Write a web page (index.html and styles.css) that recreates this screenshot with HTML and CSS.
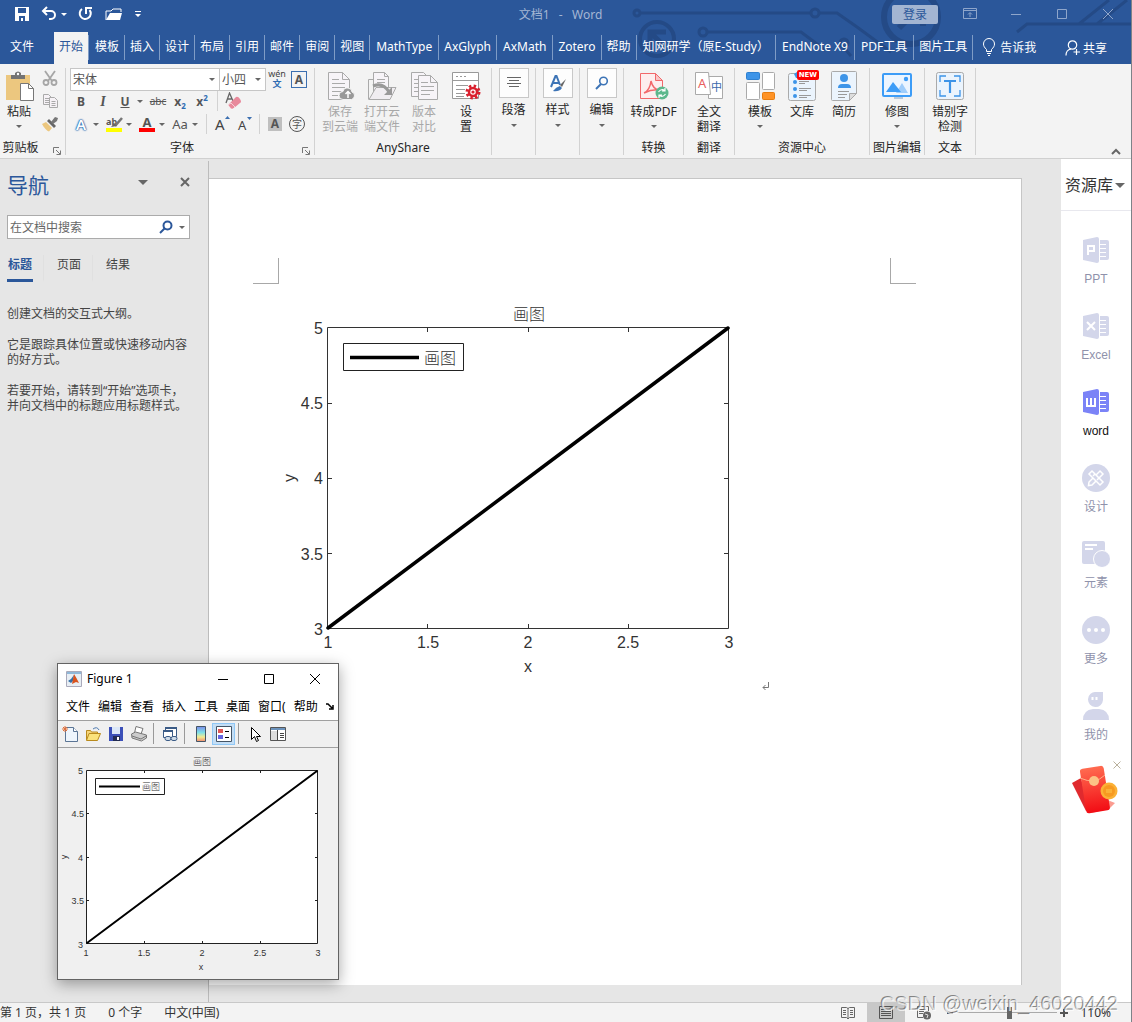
FILE: index.html
```html
<!DOCTYPE html>
<html lang="zh-CN">
<head>
    <meta charset="UTF-8">
    <meta name="viewport" content="width=device-width, initial-scale=1.0">
    <title>文档1 - Word</title>
    <link rel="stylesheet" href="styles.css">
</head>
<body>
    <header class="app-header">
        <!-- circuit pattern behind the title bar -->
        <svg class="circuit" width="500" height="64" viewBox="632 0 500 64" fill="none" stroke="#244a86" stroke-width="3">
            <circle cx="638" cy="13" r="3"/>
            <path d="M642 13H812M820 13h18l20 14 34 25M708 32h94l24 18M840 42l12 14"/>
            <circle cx="816" cy="13" r="4"/>
            <circle cx="704" cy="32" r="4"/>
            <circle cx="845" cy="43" r="4"/>
            <circle cx="658" cy="39" r="17" stroke-width="4"/>
            <path d="M651 50V32h16M652 33l14 14" stroke-width="5"/>
            <circle cx="912" cy="17" r="27" stroke-width="6"/>
            <path d="M900 28l20-20M906 8h18v18" stroke-width="6"/>
            <path d="M1018 32l10-8h104M1080 24l30-24M1098 24l30-24"/>
        </svg>

        <div class="titlebar">
            <div class="quick">
                <button aria-label="保存">
                    <svg width="16" height="16" viewBox="0 0 16 16"><path d="M1 1h14v14H1z" fill="#fff"/><path d="M4 2h8v5H4zM5 10h6v5H9v-3H7v3H5z" fill="#2b579a"/></svg>
                </button>
                <button class="has-caret" aria-label="撤消">
                    <svg width="16" height="16" viewBox="0 0 16 16" fill="none" stroke="#fff" stroke-width="2"><path d="M6 1L2 5l4 4M2 5h8a4 4 0 0 1 0 8H8"/></svg>
                    <i class="caret"></i>
                </button>
                <button aria-label="重复">
                    <svg width="16" height="16" viewBox="0 0 16 16" fill="none" stroke="#fff" stroke-width="2"><path d="M4 3a5.500 5.500 0 1 0 7.500 1M8 8V2h6"/></svg>
                </button>
                <button aria-label="打开">
                    <svg width="18" height="16" viewBox="0 0 18 16"><path d="M1 14V5h5l2-2h8v3" fill="none" stroke="#fff"/><path d="M5 7h12l-2 7H1z" fill="#fff"/></svg>
                </button>
                <button aria-label="自定义快速访问工具栏">
                    <svg width="8" height="8" viewBox="0 0 8 8" fill="#fff"><path d="M1 1h6v1H1zM1 4h6L4 7z"/></svg>
                </button>
            </div>
            <h1 class="doc-title">文档1&nbsp;&nbsp; -&nbsp;&nbsp; Word</h1>
            <div class="window-buttons">
                <button class="login">登录</button>
                <button aria-label="功能区显示选项"><svg width="14" height="12" viewBox="0 0 14 12" fill="none" stroke="#8fa6cb"><path d="M.5.5h13v10H.5zM.5 2.500h13M7 9V5M5 6.500l2-2 2 2"/></svg></button>
                <button aria-label="最小化"><svg width="12" height="12" viewBox="0 0 12 12" fill="none" stroke="#8fa6cb"><path d="M1 6.500h10"/></svg></button>
                <button aria-label="最大化"><svg width="12" height="12" viewBox="0 0 12 12" fill="none" stroke="#8fa6cb"><path d="M1.500 1.500h9v9h-9z"/></svg></button>
                <button aria-label="关闭"><svg width="12" height="12" viewBox="0 0 12 12" fill="none" stroke="#8fa6cb"><path d="M1 1l10 10M11 1L1 11"/></svg></button>
            </div>
        </div>

        <nav class="tabs">
            <a class="tab file" href="#">文件</a>
            <a class="tab active" href="#">开始</a>
            <a class="tab" href="#">模板</a>
            <a class="tab" href="#">插入</a>
            <a class="tab" href="#">设计</a>
            <a class="tab" href="#">布局</a>
            <a class="tab" href="#">引用</a>
            <a class="tab" href="#">邮件</a>
            <a class="tab" href="#">审阅</a>
            <a class="tab" href="#">视图</a>
            <a class="tab wide" href="#">MathType</a>
            <a class="tab" href="#">AxGlyph</a>
            <a class="tab wide" href="#">AxMath</a>
            <a class="tab" href="#">Zotero</a>
            <a class="tab" href="#">帮助</a>
            <a class="tab wide" href="#">知网研学（原E-Study）</a>
            <a class="tab wide" href="#">EndNote X9</a>
            <a class="tab wide" href="#">PDF工具</a>
            <a class="tab" href="#">图片工具</a>
            <a class="tell-me" href="#">
                <svg width="14" height="18" viewBox="0 0 14 18" fill="none" stroke="#fff"><path d="M4.500 13.500v-2C2.500 9.500 1.500 8 1.500 6a5.500 5.500 0 0 1 11 0c0 2-1 3.500-3 5.500v2zM5 15.500h4M6 17.500h2"/></svg>
                告诉我
            </a>
            <a class="share" href="#">
                <svg width="16" height="16" viewBox="0 0 16 16" fill="none" stroke="#fff" stroke-width="1.200"><circle cx="7.500" cy="5" r="4.200"/><path d="M1 15.500c0-4 2-6 5-6.500M11.500 9v6M8.500 12h6.500"/></svg>
                共享
            </a>
        </nav>
    </header>

    <section class="ribbon">
        <div class="group clipboard">
            <div class="tools">
                <button class="tool">
                    <svg width="30" height="30" viewBox="0 0 30 30"><path d="M2 4h24v25H2z" fill="#ecc77f"/><path d="M7 4h4V2q3-3 6 0v2h4v4H7z" fill="#737373"/><circle cx="14" cy="3" r="1.200" fill="#fff"/><path d="M16.500 12.500h8l5 5v12h-13z" fill="#fff" stroke="#777"/><path d="M24.500 12.500v5h5" fill="none" stroke="#777"/></svg>
                    <span>粘贴</span>
                    <i class="caret"></i>
                </button>
                <div class="stack">
                    <button aria-label="剪切"><svg width="16" height="16" viewBox="0 0 16 16" fill="none" stroke="#a6a6a6" stroke-width="1.800"><path d="M3 1l7 10M13 1L6 11"/><circle cx="4" cy="12.500" r="2.500"/><circle cx="12" cy="12.500" r="2.500"/></svg></button>
                    <button aria-label="复制"><svg width="16" height="16" viewBox="0 0 16 16" fill="#f6f2f6" stroke="#aaa"><path d="M1.500 1.500h5l3 3v7h-8zM3 5.500h4M3 7.500h4M3 9.500h4"/><path d="M7.500 4.500h5l3 3v7h-8zM9.500 8.500h4M9.500 10.500h4M9.500 12.500h4"/></svg></button>
                    <button aria-label="格式刷"><svg width="16" height="16" viewBox="0 0 16 16"><path d="M0 8l4-2 6 6-3 3.500C5 15 2 12 0 8z" fill="#ecc77f"/><path d="M5 5l2-2 7 7-2 2z" fill="#666"/><path d="M9 6l4-5 3 1-1 3-4 3z" fill="#777"/></svg></button>
                </div>
            </div>
            <div class="group-label">剪贴板</div>
            <button class="launcher" aria-label="剪贴板选项"><svg width="8" height="8" viewBox="0 0 8 8" fill="none" stroke="#777"><path d="M.5 6V.5H6M3 3l4 4M7.500 3.500v4h-4"/></svg></button>
        </div>

        <div class="group font">
            <div class="font-rows">
                <div class="font-row">
                    <label class="combo family"><select aria-label="字体"><option>宋体</option></select></label>
                    <label class="combo size"><select aria-label="字号"><option>小四</option></select></label>
                    <button class="pinyin"><small>wén</small><b>文</b></button>
                    <button class="char-border">A</button>
                </div>
                <div class="font-row">
                    <button class="fmt"><b>B</b></button>
                    <button class="fmt serif"><b><em>I</em></b></button>
                    <button class="fmt"><b><u>U</u></b></button>
                    <button class="drop" aria-label="下划线样式"><i class="caret"></i></button>
                    <button class="fmt small"><s>abc</s></button>
                    <button class="fmt"><b>x<sub>2</sub></b></button>
                    <button class="fmt"><b>x<sup>2</sup></b></button>
                    <span class="divider"></span>
                    <button class="fmt" aria-label="清除所有格式"><svg width="18" height="18" viewBox="0 0 18 18"><path d="M2 11L5.500 1 9 9M3.500 7h4" fill="none" stroke="#666" stroke-width="1.300"/><path d="M4 13l8-8q2-1 4 2t0 4l-6 5H7z" fill="#e8899b"/><path d="M4 13l3-2 4 4-2 2H7z" fill="#e8899b" stroke="#fff" stroke-width=".6"/></svg></button>
                </div>
                <div class="font-row">
                    <button class="fmt glow">A</button>
                    <button class="drop" aria-label="文本效果"><i class="caret"></i></button>
                    <button class="fmt" aria-label="突出显示"><svg width="18" height="18" viewBox="0 0 18 18"><text x="1" y="10" font-size="9" font-weight="700" fill="#555">ab</text><path d="M17 3l-7 8" stroke="#777" stroke-width="2.500"/><path d="M6 12l3-4 3 3z" fill="#666"/><path d="M1 13h16v4H1z" fill="#ff0"/></svg></button>
                    <button class="drop" aria-label="突出显示颜色"><i class="caret"></i></button>
                    <button class="fmt"><b class="font-color">A</b></button>
                    <button class="drop" aria-label="字体颜色"><i class="caret"></i></button>
                    <button class="fmt case">Aa</button>
                    <button class="drop" aria-label="更改大小写"><i class="caret"></i></button>
                    <span class="divider"></span>
                    <button class="fmt" aria-label="增大字号"><svg width="18" height="18" viewBox="0 0 18 18"><text x="2" y="15" font-size="15" fill="#444">A</text><path d="M12 4h5l-2.500-3z" fill="#3c6fb0"/></svg></button>
                    <button class="fmt" aria-label="减小字号"><svg width="18" height="18" viewBox="0 0 18 18"><text x="3" y="15" font-size="13" fill="#444">A</text><path d="M12 2h5l-2.500 3z" fill="#3c6fb0"/></svg></button>
                    <span class="divider"></span>
                    <button class="fmt"><b class="shade">A</b></button>
                    <button class="fmt"><span class="ring">字</span></button>
                </div>
            </div>
            <div class="group-label">字体</div>
            <button class="launcher" aria-label="字体选项"><svg width="8" height="8" viewBox="0 0 8 8" fill="none" stroke="#777"><path d="M.5 6V.5H6M3 3l4 4M7.500 3.500v4h-4"/></svg></button>
        </div>

        <div class="group anyshare">
            <div class="tools">
                <button class="tool" disabled>
                    <svg width="30" height="30" viewBox="0 0 30 30" fill="none" stroke="#aaa"><path d="M3.500 1.500h14l7 7v20h-21z" fill="#f7f4f8"/><path d="M17.500 1.500v7h7M7 8.500h7M7 12.500h13M7 16.500h13M7 20.500h9M7 24.500h6"/><path d="M18 28.500a4 4 0 0 1 0-8q1-4 5-3.500t4 4q3 1 2.500 4t-3 3.500z" fill="#999" stroke="#f3f3f3"/><path d="M23 27v-6M20.500 23l2.500-2.500 2.500 2.500" stroke="#fff" stroke-width="1.500"/></svg>
                    <span>保存<br>到云端</span>
                </button>
                <button class="tool" disabled>
                    <svg width="30" height="30" viewBox="0 0 30 30" fill="none" stroke="#aaa"><path d="M1.500 28.500v-20h5" /><path d="M6.500 1.500h11l4 4v20h-15z" fill="#f7f4f8"/><path d="M17.500 1.500v4h4M10 8.500h8M10 11.500h8"/><path d="M2 28.500l7-12h20l-6 12z" fill="#f0edf1"/><path d="M6 15q10-4 16 6" stroke="#999" stroke-width="3"/><path d="M25 16v8h-8z" fill="#999" stroke="none"/></svg>
                    <span>打开云<br>端文件</span>
                </button>
                <button class="tool" disabled>
                    <svg width="30" height="30" viewBox="0 0 30 30" fill="none" stroke="#aaa"><path d="M2.500 1.500h12l5 5v19h-17z" fill="#f7f4f8"/><path d="M5 8.500h8M5 12.500h8M5 16.500h8M5 20.500h8"/><path d="M9.500 4.500h12l7 7v17h-19z" fill="#f7f4f8"/><path d="M21.500 4.500v7h7M12 11.500h7M12 15.500h13M12 19.500h13M12 23.500h9"/></svg>
                    <span>版本<br>对比</span>
                </button>
                <button class="tool">
                    <svg width="30" height="30" viewBox="0 0 30 30" fill="none" stroke="#999"><path d="M1.500 1.500h26v26h-26z" fill="#fff"/><path d="M1.500 9.500h26M5 14.500h12M5 18.500h9M5 22.500h9M5 25.500h8"/><path d="M5 5.500h2M9 5.500h2M13 5.500h2"/><circle cx="22" cy="21" r="4" fill="#fff" stroke="#d9202e" stroke-width="2.500"/><circle cx="22" cy="21" r="6" stroke="#d9202e" stroke-width="3" stroke-dasharray="2.400 2.300"/><circle cx="22" cy="21" r="1.600" fill="#d9202e" stroke="none"/></svg>
                    <span>设<br>置</span>
                </button>
            </div>
            <div class="group-label">AnyShare</div>
        </div>

        <div class="group">
            <button class="tool collapsed">
                <span class="box"><svg width="16" height="14" viewBox="0 0 16 14" stroke="#666"><path d="M1 1.500h14M3 4.500h10M1 7.500h14M3 10.500h10"/></svg></span>
                <span>段落</span>
                <i class="caret"></i>
            </button>
        </div>
        <div class="group">
            <button class="tool collapsed">
                <span class="box"><svg width="18" height="18" viewBox="0 0 18 18"><path d="M2 13L6.500 2h1L11 11M4 9h6" fill="none" stroke="#3d74b6" stroke-width="2"/><path d="M17 5l-4 8-2-2z" fill="#666"/><path d="M4 17q3-4 7-5l2 2q-3 4-9 3z" fill="#3d74b6"/></svg></span>
                <span>样式</span>
                <i class="caret"></i>
            </button>
        </div>
        <div class="group">
            <button class="tool collapsed">
                <span class="box"><svg width="14" height="14" viewBox="0 0 14 14" fill="none" stroke="#3d74b6" stroke-width="2"><circle cx="8.500" cy="5" r="3.800" stroke-width="1.600"/><path d="M6 8l-5 5"/></svg></span>
                <span>编辑</span>
                <i class="caret"></i>
            </button>
        </div>

        <div class="group pdf">
            <div class="tools">
                <button class="tool">
                    <svg width="30" height="30" viewBox="0 0 30 30" fill="none" stroke="#f2686a"><path d="M1.500 2.500h15l7 7v18h-22z" fill="#fdeeee"/><path d="M16.500 2.500v7h7z" fill="#f9c6c6"/><path d="M5 22q6-3 7-12 2 9 9 9-8-1-16 3z" stroke-width="1.500"/><circle cx="23" cy="22" r="6.500" fill="#5cb88c" stroke="none"/><path d="M19.500 21q3-4 6.500-1M26.500 23q-3 4-6.500 1M26 17v3h-3M20 27v-3h3" stroke="#fff" stroke-width="1.200"/></svg>
                    <span>转成PDF</span>
                    <i class="caret"></i>
                </button>
            </div>
            <div class="group-label">转换</div>
        </div>

        <div class="group translate">
            <div class="tools">
                <button class="tool">
                    <svg width="30" height="30" viewBox="0 0 30 30" fill="#fff" stroke="#aaa"><path d="M14.500 5.500h14v22h-14z"/><text x="17" y="20" font-size="11" fill="#3968ab" stroke="none">中</text><path d="M1.500 1.500h13l2 22h-15z"/><text x="4" y="17" font-size="13" fill="#e8605f" stroke="none">A</text></svg>
                    <span>全文<br>翻译</span>
                </button>
            </div>
            <div class="group-label">翻译</div>
        </div>

        <div class="group resources">
            <div class="tools">
                <button class="tool">
                    <svg width="30" height="30" viewBox="0 0 30 30" stroke="#aaa"><rect x="1.500" y="1.500" width="13" height="7" rx="1" fill="#3d94e8" stroke="#2f80d0"/><rect x="17.500" y="1.500" width="12" height="17" rx="1" fill="#fff"/><rect x="1.500" y="11.500" width="13" height="17" rx="1" fill="#fff"/><rect x="17.500" y="21.500" width="12" height="7" rx="1" fill="#ff9326" stroke="#e67d10"/></svg>
                    <span>模板</span>
                    <i class="caret"></i>
                </button>
                <button class="tool">
                    <svg width="30" height="30" viewBox="0 0 30 30"><rect x="1.500" y="2.500" width="27" height="27" rx="2" fill="#ebf4fd" stroke="#aaa"/><path d="M12 10.500h10M12 12.500h6M12 17.500h12M12 19.500h8M12 24.500h12M12 26.500h8" stroke="#999"/><g fill="#3d94e8"><circle cx="8" cy="11" r="2"/><circle cx="8" cy="18" r="2"/><circle cx="8" cy="25" r="2"/><path d="M7 3l3-2h3v6H9z"/></g></svg>
                    <em class="badge">NEW</em>
                    <span>文库</span>
                </button>
                <button class="tool">
                    <svg width="30" height="30" viewBox="0 0 30 30"><path d="M3.500.500h23q1 0 1 1v21l-7 7h-17q-1 0-1-1v-27q0-1 1-1z" fill="#ebf4fd" stroke="#aaa"/><circle cx="15" cy="7" r="4" fill="#3d94e8"/><path d="M9 17q0-4 4-4h5q4 0 4 4z" fill="#3d94e8"/><path d="M9 20.500h11M9 23.500h9M9 26.500h7" stroke="#999"/><path d="M20.500 29.500v-7h7z" fill="#ddd" stroke="#aaa"/></svg>
                    <span>简历</span>
                </button>
            </div>
            <div class="group-label">资源中心</div>
        </div>

        <div class="group picture">
            <div class="tools">
                <button class="tool">
                    <svg width="30" height="30" viewBox="0 0 30 30"><rect x="1" y="3" width="28" height="22" rx="1" fill="#ecf5ff" stroke="#3c9cf7" stroke-width="2"/><path d="M14 22l6-10 6 10z" fill="#9fcdfb"/><path d="M4 21l7-10 8 10z" fill="#3c9cf7"/><circle cx="24" cy="8" r="2.200" fill="#3c9cf7"/><path d="M12 27h9" stroke="#b8c8da" stroke-width="2"/></svg>
                    <span>修图</span>
                    <i class="caret"></i>
                </button>
            </div>
            <div class="group-label">图片编辑</div>
        </div>

        <div class="group proof">
            <div class="tools">
                <button class="tool">
                    <svg width="30" height="30" viewBox="0 0 30 30" fill="none"><rect x="1.500" y="1.500" width="27" height="27" rx="2" fill="#ebf4fd" stroke="#aaa"/><path d="M5 11V5h6M19 5h6v6M25 19v6h-6M11 25H5v-6" stroke="#3d94e8" stroke-width="1.300"/><path d="M9 10h12M15 10v12" stroke="#3d94e8" stroke-width="2.200"/></svg>
                    <span>错别字<br>检测</span>
                </button>
            </div>
            <div class="group-label">文本</div>
        </div>

        <button class="fold" aria-label="折叠功能区"><svg width="10" height="7" viewBox="0 0 10 7" fill="none" stroke="#666" stroke-width="2"><path d="M1 6l4-4 4 4"/></svg></button>
    </section>

    <main class="workspace">
        <aside class="nav-pane">
            <div class="pane-head">
                <h2>导航</h2>
                <button aria-label="任务窗格选项"><i class="caret large"></i></button>
                <button aria-label="关闭窗格"><svg width="10" height="10" viewBox="0 0 10 10" stroke="#666" stroke-width="2"><path d="M1 1l8 8M9 1L1 9"/></svg></button>
            </div>
            <div class="search">
                <input type="text" placeholder="在文档中搜索" aria-label="在文档中搜索">
                <button aria-label="搜索"><svg width="14" height="14" viewBox="0 0 14 14" fill="none" stroke="#2b579a" stroke-width="2"><circle cx="8.500" cy="5.500" r="4"/><path d="M6 8l-5 5"/></svg></button>
                <button aria-label="搜索选项"><i class="caret"></i></button>
            </div>
            <div class="pane-tabs">
                <button class="current">标题</button>
                <button>页面</button>
                <button>结果</button>
            </div>
            <div class="pane-help">
                <p>创建文档的交互式大纲。</p>
                <p>它是跟踪具体位置或快速移动内容的好方式。</p>
                <p>若要开始，请转到“开始”选项卡，并向文档中的标题应用标题样式。</p>
            </div>
        </aside>

        <div class="canvas">
            <article class="page">
                <div class="crop-marks"><span class="left"></span><span class="right"></span></div>
                <p class="paragraph">
                    <svg class="plot" width="482" height="399" viewBox="279 291 482 399">
                        <path d="M327.500 327.500h401v301h-401z" fill="#fff" stroke="#333"/>
                        <path d="M427.500 328v4M528.500 328v4M628.500 328v4M427.500 628v-4M528.500 628v-4M628.500 628v-4M328 403.500h4M328 478.500h4M328 553.500h4M728 403.500h-4M728 478.500h-4M728 553.500h-4" stroke="#333"/>
                        <path d="M328 628L728 328" stroke="#000" stroke-width="3.500" stroke-linecap="round"/>
                        <path d="M343.500 343.500h120v27h-120z" fill="#fff" stroke="#222"/>
                        <path d="M350 357.500h69" stroke="#000" stroke-width="3.500"/>
                        <text class="cjk" x="424" y="364">画图</text>
                        <text class="cjk middle" x="529" y="320">画图</text>
                        <g class="end">
                            <text x="323" y="334">5</text>
                            <text x="323" y="409">4.5</text>
                            <text x="323" y="484">4</text>
                            <text x="323" y="560">3.5</text>
                            <text x="323" y="635">3</text>
                        </g>
                        <g class="middle">
                            <text x="328" y="648">1</text>
                            <text x="428" y="648">1.5</text>
                            <text x="528" y="648">2</text>
                            <text x="628" y="648">2.5</text>
                            <text x="729" y="648">3</text>
                            <text x="528" y="672">x</text>
                            <text transform="translate(295 478) rotate(-90)">y</text>
                        </g>
                    </svg>
                    <svg width="8" height="8" viewBox="0 0 8 8" fill="none" stroke="#777"><path d="M6.500 0v5.500H1M3.500 3L1 5.500 3.500 8"/></svg>
                </p>
            </article>
        </div>

        <aside class="library">
            <button class="library-head">资源库<i class="caret large"></i></button>
            <a class="entry" href="#">
                <svg width="28" height="28" viewBox="0 0 28 28"><path d="M1 4l14-3q2 0 2 2v22q0 2-2 2L1 24zM18 4h7q2 0 2 2v16q0 2-2 2h-7z" fill="#d3d6ea"/><path d="M18 8.500h6M18 12.500h6M18 16.500h6M18 20.500h6" stroke="#fff"/><path d="M6 19V10h6v5H6" fill="none" stroke="#fff" stroke-width="2"/></svg>
                PPT
            </a>
            <a class="entry" href="#">
                <svg width="28" height="28" viewBox="0 0 28 28"><path d="M1 4l14-3q2 0 2 2v22q0 2-2 2L1 24zM18 4h7q2 0 2 2v16q0 2-2 2h-7z" fill="#d3d6ea"/><path d="M18 8.500h6M18 12.500h6M18 16.500h6M18 20.500h6" stroke="#fff"/><path d="M5 10l8 8M13 10l-8 8" fill="none" stroke="#fff" stroke-width="2"/></svg>
                Excel
            </a>
            <a class="entry current" href="#">
                <svg width="28" height="28" viewBox="0 0 28 28"><path d="M1 4l14-3q2 0 2 2v22q0 2-2 2L1 24zM18 4h7q2 0 2 2v16q0 2-2 2h-7z" fill="#7b83f7"/><path d="M18 8.500h6M18 12.500h6M18 16.500h6M18 20.500h6" stroke="#fff"/><path d="M5 10v8h8v-8M9 10v8" fill="none" stroke="#fff" stroke-width="2"/></svg>
                word
            </a>
            <a class="entry" href="#">
                <svg width="28" height="28" viewBox="0 0 28 28"><circle cx="14" cy="14" r="14" fill="#d3d6ea"/><g fill="none" stroke="#fff" stroke-width="1.500"><path d="M18 7l3 3L10 21l-3.500.500L7 18z"/><path d="M10 7l11 11-3 3L7 10z" fill="#d3d6ea"/><path d="M11 12l2-2M15 16l2-2"/></g></svg>
                设计
            </a>
            <a class="entry" href="#">
                <svg width="28" height="28" viewBox="0 0 28 28"><rect y="1" width="23" height="23" rx="2" fill="#d3d6ea"/><path d="M3 5h12M3 9h8" stroke="#fff" stroke-width="2"/><circle cx="20" cy="19" r="8.500" fill="#d3d6ea" stroke="#fff"/></svg>
                元素
            </a>
            <a class="entry" href="#">
                <svg width="28" height="28" viewBox="0 0 28 28"><circle cx="14" cy="14" r="14" fill="#d3d6ea"/><g fill="#fff"><circle cx="7" cy="14" r="2"/><circle cx="14" cy="14" r="2"/><circle cx="21" cy="14" r="2"/></g></svg>
                更多
            </a>
            <a class="entry" href="#">
                <svg width="28" height="28" viewBox="0 0 28 28"><path d="M14 0h7v8a7.500 7.500 0 1 1-7-8zM1 28q0-10 10-11h6q10 1 10 11z" fill="#d3d6ea"/><path d="M10.500 5v3M14.500 5v3" stroke="#fff" stroke-width="2"/></svg>
                我的
            </a>
            <div class="promo">
                <button aria-label="关闭活动"><svg width="8" height="8" viewBox="0 0 8 8" stroke="#b9b09c"><path d="M.5.5l7 7M7.500.5l-7 7"/></svg></button>
                <svg width="50" height="50" viewBox="0 0 50 50"><defs><linearGradient id="packet" x2="0" y2="1"><stop offset="0" stop-color="#ff6b50"/><stop offset="1" stop-color="#f20c14"/></linearGradient></defs><path d="M1 18l9-5 8 32-3 1z" fill="#e02a2e"/><path d="M34 34l10 4-6 6-18 4z" fill="#fb9c90"/><rect x="12" y="2" width="24" height="45" rx="3" fill="url(#packet)" transform="rotate(-9 24 25)"/><path d="M9 13q15 7 25-3" fill="none" stroke="#ffb08a"/><circle cx="23" cy="16" r="5" fill="#fcc385"/><circle cx="38" cy="26" r="8.500" fill="#fbb136"/><circle cx="38" cy="26" r="6" fill="#f79a21"/><path d="M35 24v4h6v-4z" fill="#fbb136"/></svg>
            </div>
        </aside>
    </main>

    <footer class="status">
        <span>第 1 页，共 1 页</span>
        <span>0 个字</span>
        <span>中文(中国)</span>
        <div class="views">
            <button aria-label="阅读视图"><svg width="14" height="14" viewBox="0 0 14 14" fill="none" stroke="#666"><path d="M.5 1.500h5l1.500 1 1.500-1h5v10h-5L7 13l-1.500-1.500h-5zM7 2v10M2 4.500h3M2 6.500h3M2 8.500h3M9 4.500h3M9 6.500h3M9 8.500h3"/></svg></button>
            <button class="current" aria-label="页面视图"><svg width="14" height="14" viewBox="0 0 14 14" fill="none" stroke="#555"><path d="M.5.5h13v12H.5zM2 3.500h10M2 5.500h10M2 7.500h10M2 9.500h10"/></svg></button>
            <button aria-label="Web 版式视图"><svg width="14" height="14" viewBox="0 0 14 14" fill="none" stroke="#666"><path d="M6 11.500H.5V.5h11V5M2 3.500h7M2 5.500h5M2 7.500h4"/><circle cx="10" cy="9.500" r="4" fill="#666" stroke="none"/><path d="M8 8l3 1-1 3" stroke="#ddd"/></svg></button>
        </div>
        <div class="zoom">
            <button aria-label="缩小"><svg width="8" height="8" viewBox="0 0 8 8" stroke="#555" stroke-width="2"><path d="M1 4h6"/></svg></button>
            <input type="range" min="0" max="212" value="110" aria-label="缩放">
            <button aria-label="放大"><svg width="8" height="8" viewBox="0 0 8 8" stroke="#555" stroke-width="2"><path d="M0 4h8M4 0v8"/></svg></button>
            <output>110%</output>
        </div>
    </footer>

    <section class="figure-window">
        <div class="figure-title">
            <svg width="16" height="16" viewBox="0 0 16 16"><path d="M.5.5h15v15H.5z" fill="#e8eef4" stroke="#aab"/><path d="M1 1h14v2H1z" fill="#8fb8d8"/><path d="M2 10l3-2 3-4-1 6-2 2z" fill="#3571a8"/><path d="M8 3q2 3 5 9l-3-1-4 2q1-5 2-10z" fill="#d9531e"/></svg>
            <h2>Figure 1</h2>
            <button aria-label="最小化"><svg width="12" height="12" viewBox="0 0 12 12" fill="none" stroke="#000"><path d="M1 6.500h10"/></svg></button>
            <button aria-label="最大化"><svg width="12" height="12" viewBox="0 0 12 12" fill="none" stroke="#000"><path d="M1.500 1.500h9v9h-9z"/></svg></button>
            <button aria-label="关闭"><svg width="12" height="12" viewBox="0 0 12 12" fill="none" stroke="#000"><path d="M1 1l10 10M11 1L1 11"/></svg></button>
        </div>
        <nav class="figure-menu">
            <a href="#">文件</a>
            <a href="#">编辑</a>
            <a href="#">查看</a>
            <a href="#">插入</a>
            <a href="#">工具</a>
            <a href="#">桌面</a>
            <a href="#">窗口(</a>
            <a href="#">帮助</a>
            <button aria-label="更多菜单"><svg width="8" height="8" viewBox="0 0 8 8" fill="none" stroke="#000" stroke-width="1.500"><path d="M0 2h2l4 4M7 3v4H3"/></svg></button>
        </nav>
        <div class="figure-tools">
            <button aria-label="新建图窗"><svg width="16" height="16" viewBox="0 0 16 16"><path d="M3.500 1.500h8l4 4v10h-12z" fill="#eef5fc" stroke="#5b7595"/><path d="M11.500 1.500v4h4" fill="#fff" stroke="#5b7595"/><path d="M3 0v6M0 3h6M1 1l4 4M5 1L1 5" stroke="#e2703a"/></svg></button>
            <button aria-label="打开文件"><svg width="16" height="16" viewBox="0 0 16 16"><path d="M1.500 14V4.500h4l1 1.500h6v2" fill="#f6d57a" stroke="#b98a1d"/><path d="M1.500 14.500l2.500-7h11.500l-3 7z" fill="#fbe27b" stroke="#b98a1d"/><path d="M8 3q4-3 6 1" fill="none" stroke="#4d79b0"/></svg></button>
            <button aria-label="保存图窗"><svg width="16" height="16" viewBox="0 0 16 16"><path d="M1 1h14v14H1z" fill="#3c50b8"/><path d="M4 1h8v7H4z" fill="#dbe7f8"/><path d="M5 10h7v5H5z" fill="#222b52"/><path d="M9 11h2v3H9z" fill="#fff"/></svg></button>
            <button aria-label="打印图窗"><svg width="16" height="16" viewBox="0 0 16 16" stroke="#777"><path d="M3.500 7L5 .5l7 2L10 8z" fill="#fff"/><path d="M.5 8l4-2 11 3v3l-5 3L1 12z" fill="#ccc"/><path d="M1 10l9 3 5-3" fill="none"/></svg></button>
            <span class="divider"></span>
            <button aria-label="链接绘图"><svg width="16" height="16" viewBox="0 0 16 16" fill="#fff" stroke="#3b5b86"><path d="M3.500 1.500h11v9h-11z"/><path d="M1.500 4.500h9v7h-9z"/><path d="M1 5h10M3 2h12" stroke-width="2"/><rect x="3" y="10.500" width="6" height="4" rx="2" fill="#cfdbe8"/><rect x="9" y="10.500" width="6" height="4" rx="2" fill="#cfdbe8"/></svg></button>
            <span class="divider"></span>
            <button aria-label="插入颜色栏"><svg width="16" height="16" viewBox="0 0 16 16"><defs><linearGradient id="bar" x2="0" y2="1"><stop offset="0" stop-color="#7b8bea"/><stop offset=".4" stop-color="#7fe0e8"/><stop offset=".7" stop-color="#f4ec90"/><stop offset="1" stop-color="#f08a70"/></linearGradient></defs><path d="M3.500.5h9v15h-9z" fill="url(#bar)" stroke="#456"/></svg></button>
            <button class="current" aria-label="插入图例"><svg width="16" height="16" viewBox="0 0 16 16"><path d="M.5.5h15v15H.5z" fill="#fff" stroke="#456"/><path d="M2 3h5v4H2z" fill="#e25555"/><path d="M2 9h5v4H2z" fill="#6565e0"/><path d="M9 5.500h4M9 11.500h4" stroke="#000"/></svg></button>
            <span class="divider"></span>
            <button aria-label="编辑绘图"><svg width="16" height="16" viewBox="0 0 16 16"><path d="M4.500 1.500v12l3-3 2 5 2-1-2-4h4z" fill="#fff" stroke="#000"/></svg></button>
            <button aria-label="属性检查器"><svg width="16" height="16" viewBox="0 0 16 16"><path d="M.5 1.500h15v13H.5z" fill="#fff" stroke="#555"/><path d="M1 2h14v2H1z" fill="#6c93bd"/><path d="M1 5h6v9H1z" fill="#ddd"/><path d="M7.500 4v10M10 7.500h4M10 9.500h4M10 11.500h4" stroke="#444"/></svg></button>
        </div>
        <svg class="plot small" width="280" height="231" viewBox="58 748 280 231">
            <path d="M86.500 770.500h231v173h-231z" fill="#fff" stroke="#222"/>
            <path d="M144.500 771v2M202.500 771v2M260.500 771v2M144.500 943v-2M202.500 943v-2M260.500 943v-2M87 813.500h2M87 857.500h2M87 900.500h2M317 813.500h-2M317 857.500h-2M317 900.500h-2" stroke="#222"/>
            <path d="M87 943L317 771" stroke="#000" stroke-width="2" stroke-linecap="round"/>
            <path d="M95.500 778.500h69v16h-69z" fill="#fff" stroke="#222"/>
            <path d="M99 786.500h41" stroke="#000" stroke-width="2"/>
            <text class="cjk" x="142" y="790">画图</text>
            <text class="cjk middle" x="202" y="765">画图</text>
            <g class="end">
                <text x="83" y="774">5</text>
                <text x="84" y="817">4.5</text>
                <text x="83" y="861">4</text>
                <text x="84" y="904">3.5</text>
                <text x="83" y="948">3</text>
            </g>
            <g class="middle">
                <text x="86" y="956">1</text>
                <text x="144" y="956">1.5</text>
                <text x="202" y="956">2</text>
                <text x="260" y="956">2.5</text>
                <text x="318" y="956">3</text>
                <text x="201" y="970">x</text>
                <text transform="translate(67 857) rotate(-90)">y</text>
            </g>
        </svg>
    </section>

    <div class="watermark">CSDN @weixin_46020442</div>
</body>
</html>
```
FILE: styles.css
```css
* {
    margin: 0;
    padding: 0;
    box-sizing: border-box;
}

body {
    position: relative;
    display: flex;
    flex-direction: column;
    height: 100vh;
    overflow: hidden;
    border-right: 1px solid #7d8288;
    background: #e6e6e6;
    color: #262626;
    font: 12px/15px "Noto Sans", "Noto Sans CJK SC", sans-serif;
}

button,
input,
select {
    border: 0;
    background: none;
    color: inherit;
    font: inherit;
}

a {
    color: inherit;
    text-decoration: none;
}

svg {
    display: block;
    flex: none;
}

.caret {
    display: block;
    width: 0;
    border: 3px solid transparent;
    border-top-color: #666;
    border-bottom: 0;
}

.caret.large {
    border-width: 5px;
    border-bottom: 0;
}

/* Title bar and tabs */
.app-header {
    position: relative;
    background: #2b579a;
    color: #fff;
}

.circuit {
    position: absolute;
    top: 0;
    right: 0;
}

.titlebar {
    position: relative;
    display: grid;
    grid-template-columns: 1fr auto 1fr;
    align-items: center;
    height: 28px;
}

.quick {
    display: flex;
    align-items: center;
    gap: 11px;
    padding-left: 14px;
}

.quick .caret {
    border-top-color: #fff;
}

.has-caret {
    display: flex;
    align-items: center;
    gap: 4px;
}

.doc-title {
    padding-right: 10px;
    color: #a4b6d4;
    font-size: 12px;
    font-weight: 400;
}

.window-buttons {
    display: flex;
    align-items: center;
    justify-content: flex-end;
}

.window-buttons button {
    display: flex;
    justify-content: center;
    width: 46px;
}

.window-buttons .login {
    margin-right: 9px;
    padding: 2px 0;
    border-radius: 2px;
    background: #a3b5d2;
    color: #2b579a;
}

.tabs {
    position: relative;
    display: flex;
    align-items: flex-end;
    height: 36px;
    padding-bottom: 4px;
}

.tab {
    padding: 4px 5px 6px;
    border-right: 1px solid #7f9cc6;
    white-space: nowrap;
}

.tab.wide {
    padding-right: 6px;
    padding-left: 6px;
}

.tab.file {
    padding-right: 20px;
    padding-left: 10px;
    border-right: 0;
}

.tab.active {
    margin-bottom: -4px;
    padding: 7px 5px 10px;
    border-right: 0;
    background: #f3f3f3;
    color: #2b579a;
}

.tab.active + .tab {
    padding-left: 6px;
    border-left: 1px solid #7f9cc6;
}

.tell-me,
.share {
    display: flex;
    align-items: center;
    gap: 4px;
    padding: 0 0 4px 9px;
    white-space: nowrap;
}

.share {
    gap: 2px;
    margin-left: auto;
    padding-right: 24px;
}

/* Ribbon */
.ribbon {
    display: flex;
    height: 95px;
    padding: 4px 0 3px;
    border-bottom: 1px solid #d0d0d0;
    background: #f3f3f3;
}

.group {
    position: relative;
    display: flex;
    flex: none;
    flex-direction: column;
    width: 44px;
    border-right: 1px solid #d2d2d2;
}

.group.clipboard { width: 66px; }
.group.font { width: 249px; }
.group.anyshare { width: 177px; }
.group.pdf { width: 60px; }
.group.translate { width: 51px; }
.group.resources { width: 135px; }
.group.picture { width: 55px; }
.group.proof { width: 51px; }

.tools {
    display: flex;
    flex: 1;
    justify-content: center;
}

.tool {
    position: relative;
    display: flex;
    flex-direction: column;
    align-items: center;
    gap: 3px;
    min-width: 42px;
    padding-top: 3px;
    white-space: nowrap;
}

.tool .caret {
    margin-top: 3px;
}

.tool:disabled {
    color: #a8a8a8;
}

.tool.collapsed {
    gap: 4px;
    padding-top: 0;
}

.tool .box {
    display: flex;
    align-items: center;
    justify-content: center;
    width: 30px;
    height: 30px;
    border: 1px solid #c8c8c8;
    background: #fdfdfd;
}

.clipboard .tools {
    justify-content: flex-start;
}

.clipboard .tool {
    min-width: 38px;
}

.stack {
    display: flex;
    flex-direction: column;
    gap: 7px;
    padding: 2px 4px;
}

.group-label {
    line-height: 14px;
    text-align: center;
    white-space: nowrap;
}

.clipboard .group-label {
    padding-right: 24px;
}

.font .group-label {
    padding-right: 16px;
}

.launcher {
    position: absolute;
    right: 4px;
    bottom: 0;
}

.badge {
    position: absolute;
    top: 2px;
    right: 4px;
    padding: 0 2px;
    border-radius: 2px;
    background: #f00;
    color: #fff;
    font: 700 7px/10px "DejaVu Sans", sans-serif;
}

.fold {
    align-self: flex-end;
    margin-left: auto;
    padding-right: 10px;
}

/* Font group */
.font-rows {
    display: flex;
    flex: 1;
    flex-direction: column;
    padding-left: 4px;
    color: #555;
}

.font-row {
    display: flex;
    align-items: center;
    height: 22px;
}

.font-row:last-child {
    margin-top: 1px;
}

.combo {
    position: relative;
    border: 1px solid #c6c6c6;
    background: #fff;
}

.combo::after {
    content: '';
    position: absolute;
    top: 9px;
    right: 4px;
    border: 3px solid transparent;
    border-top-color: #666;
    border-bottom: 0;
    pointer-events: none;
}

.combo select {
    display: block;
    width: 100%;
    height: 21px;
    padding-left: 2px;
    appearance: none;
}

.combo.family { width: 150px; }

.combo.size {
    width: 47px;
    margin-left: -1px;
}

.pinyin {
    width: 22px;
    color: #444;
}

.pinyin small,
.pinyin b {
    display: block;
    font-size: 9px;
    font-weight: 400;
    line-height: 10px;
}

.pinyin b {
    color: #2f6db3;
    font-weight: 700;
}

.char-border {
    width: 16px;
    margin-left: 3px;
    border: 1px solid #3c6fb0;
    font-weight: 700;
    line-height: 15px;
}

.fmt {
    display: flex;
    align-items: center;
    justify-content: center;
    width: 22px;
    height: 22px;
}

.fmt.small {
    font-size: 10px;
}

.fmt.case {
    font-size: 13px;
}

.fmt.serif {
    font-family: "Liberation Serif", serif;
    font-size: 14px;
}

.fmt sub,
.fmt sup {
    color: #2f6db3;
    font-size: 8px;
    line-height: 0;
}

.fmt.glow {
    color: #fff;
    font-size: 15px;
    font-weight: 600;
    text-shadow: 0 0 1px #2f6db3, 0 0 1px #2f6db3, 0 0 2px #2f6db3, 0 0 2px #2f6db3;
}

.font-color {
    width: 16px;
    height: 16px;
    border-bottom: 4px solid #f00;
    font-size: 13px;
    line-height: 12px;
}

.shade {
    width: 14px;
    background: #bfbfbf;
    line-height: 14px;
}

.ring {
    width: 16px;
    border: 1px solid #555;
    border-radius: 50%;
    font-size: 10px;
    line-height: 14px;
}

.drop {
    width: 11px;
    padding-left: 1px;
}

.font-row .divider {
    width: 1px;
    height: 20px;
    margin: 0 4px;
    background: #d2d2d2;
}

/* Workspace */
.workspace {
    display: flex;
    flex: 1;
    min-height: 0;
}

.nav-pane {
    width: 209px;
    margin-top: 2px;
    padding: 12px 18px 0 7px;
    border-right: 1px solid #bcbcbc;
    color: #444;
}

.pane-head {
    display: flex;
    align-items: center;
    height: 24px;
}

.pane-head h2 {
    margin-right: auto;
    color: #2b579a;
    font-size: 21px;
    font-weight: 400;
    line-height: 24px;
}

.pane-head button + button {
    margin-left: 32px;
}

.pane-head button {
    margin-bottom: 6px;
}

.search {
    display: flex;
    align-items: center;
    gap: 6px;
    height: 24px;
    margin-top: 18px;
    padding: 0 4px 0 2px;
    border: 1px solid #ababab;
    background: #fff;
}

.search input {
    flex: 1;
    min-width: 0;
}

.search input::placeholder {
    color: #666;
}

.pane-tabs {
    display: flex;
    margin-top: 16px;
}

.pane-tabs button {
    margin-right: 10px;
    padding: 2px 1px 7px;
    border-bottom: 3px solid transparent;
}

.pane-tabs button + button {
    padding-left: 13px;
    border-left: 1px solid #e0e0e0;
}

.pane-tabs .current {
    border-bottom-color: #2b579a;
    color: #2b579a;
    font-weight: 700;
}

.pane-help {
    margin-top: 24px;
}

.pane-help p {
    margin-bottom: 16px;
}

.canvas {
    flex: 1;
    padding: 19px 39px 17px 0;
}

.page {
    height: 100%;
    border-top: 1px solid #c6c6c6;
    border-right: 1px solid #c6c6c6;
    background: #fff;
}

.crop-marks {
    display: flex;
    justify-content: space-between;
    padding: 79px 105px 0 44px;
}

.crop-marks span {
    width: 26px;
    height: 26px;
    border-bottom: 1px solid #a8a8a8;
}

.crop-marks .left {
    border-right: 1px solid #a8a8a8;
}

.crop-marks .right {
    border-left: 1px solid #a8a8a8;
}

.paragraph {
    display: flex;
    align-items: flex-end;
    gap: 1px;
    padding: 7px 0 0 70px;
}

.plot {
    fill: #333;
    font-family: "Liberation Sans", sans-serif;
    font-size: 16px;
}

.plot .cjk {
    font-family: "Noto Sans CJK SC", sans-serif;
    font-weight: 300;
}

.plot .middle {
    text-anchor: middle;
}

.plot .end {
    text-anchor: end;
}

.plot.small {
    background: #f0f0f0;
    font-size: 9px;
}

/* Resource library */
.library {
    display: flex;
    flex-direction: column;
    align-items: center;
    width: 70px;
    background: #fff;
    color: #8f92ab;
}

.library-head {
    display: flex;
    align-items: center;
    justify-content: center;
    gap: 2px;
    width: 100%;
    height: 52px;
    margin-bottom: 25px;
    padding: 2px 2px 0 0;
    border-bottom: 1px solid #e8e8ee;
    color: #333;
    font-size: 16px;
    white-space: nowrap;
}

.entry {
    display: flex;
    flex-direction: column;
    align-items: center;
    gap: 8px;
    height: 76px;
    font-family: "Liberation Sans", "Noto Sans CJK SC", sans-serif;
}

.entry.current {
    color: #111;
}

.promo {
    display: flex;
    flex-direction: column;
    margin-top: -7px;
}

.promo button {
    align-self: flex-end;
    margin-bottom: -4px;
}

/* Status bar */
.status {
    display: flex;
    align-items: center;
    gap: 22px;
    height: 20px;
    border-top: 1px solid #c8c8c8;
    background: #f3f3f3;
    color: #333;
    white-space: nowrap;
}

.views {
    display: flex;
    align-self: stretch;
    margin-left: auto;
}

.views button {
    display: flex;
    align-items: center;
    justify-content: center;
    width: 38px;
}

.views .current {
    background: #c8c8c8;
}

.zoom {
    display: flex;
    align-items: center;
    gap: 3px;
    margin-left: -19px;
    padding-right: 20px;
}

.zoom input {
    width: 100px;
    height: 12px;
    appearance: none;
    background: linear-gradient(#aaa, #aaa) center / 100% 1px no-repeat;
}

.zoom input::-webkit-slider-thumb {
    width: 5px;
    height: 12px;
    appearance: none;
    background: #666;
}

.zoom output {
    margin-left: 9px;
}

/* Floating figure window */
.figure-window {
    position: absolute;
    top: 663px;
    left: 57px;
    width: 282px;
    border: 1px solid #636363;
    background: #fff;
    box-shadow: 0 4px 14px rgba(0, 0, 0, 0.35);
    color: #000;
}

.figure-title {
    display: flex;
    align-items: center;
    height: 29px;
    padding-left: 8px;
}

.figure-title h2 {
    margin: 0 auto 0 5px;
    font-size: 12px;
    font-weight: 400;
}

.figure-title button {
    display: flex;
    justify-content: center;
    width: 46px;
}

.figure-menu {
    display: flex;
    align-items: center;
    gap: 8px;
    height: 28px;
    padding: 0 4px 1px 8px;
    border-bottom: 1px solid #a0a0a0;
    white-space: nowrap;
}

.figure-menu button {
    margin-left: auto;
}

.figure-tools {
    display: flex;
    align-items: center;
    height: 27px;
    padding-bottom: 1px;
    border-bottom: 1px solid #a0a0a0;
    background: #f0f0f0;
}

.figure-tools button {
    display: flex;
    align-items: center;
    justify-content: center;
    width: 23px;
    height: 22px;
}

.figure-tools .current {
    border: 1px solid #90c8f6;
    background: #c4def5;
}

.figure-tools .divider {
    width: 1px;
    height: 21px;
    margin: 0 4px 0 3px;
    background: #999;
}

.watermark {
    position: absolute;
    right: 12px;
    bottom: 6px;
    color: rgba(255, 255, 255, 0.7);
    font: 20px/24px "Liberation Sans", sans-serif;
    text-shadow: -1px -1px 0 rgba(100, 100, 100, 0.75);
    pointer-events: none;
}
```
